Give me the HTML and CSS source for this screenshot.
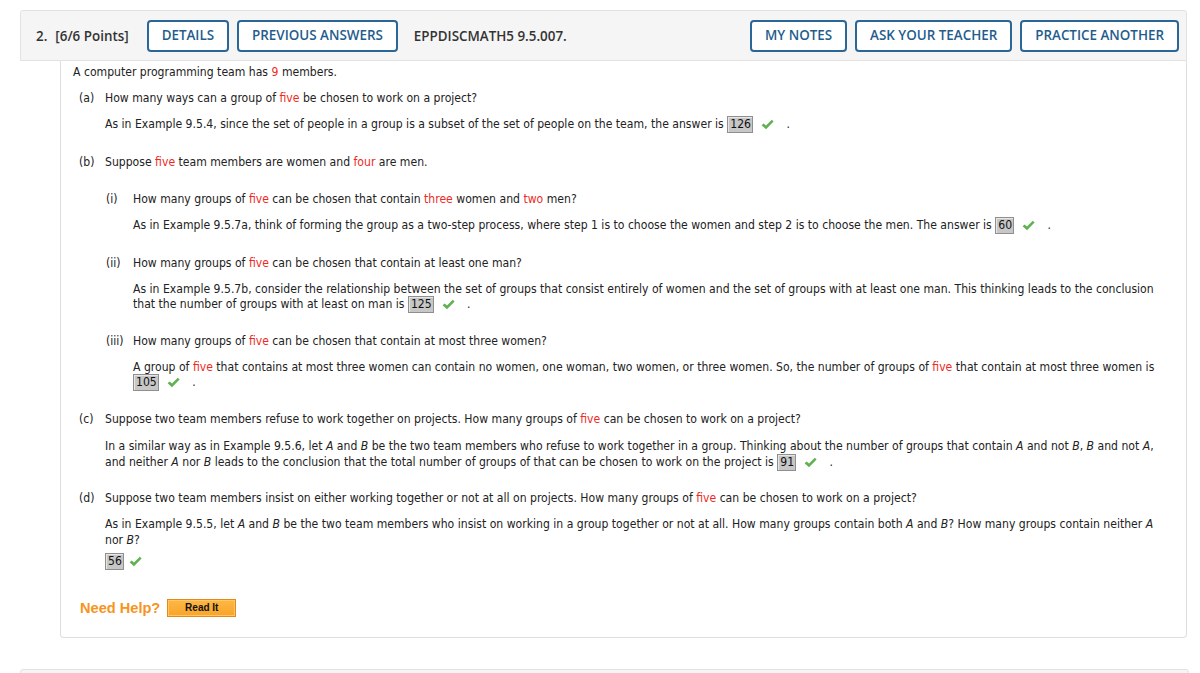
FILE: index.html
```html
<!DOCTYPE html>
<html lang="en">
<head>
<meta charset="utf-8">
<title>Question 2</title>
<link rel="stylesheet" href="styles.css">
</head>
<body>
<div class="question">
  <div class="q-header">
    <span class="q-num">2.</span>
    <span class="q-points">[6/6 Points]</span>
    <button class="btn">DETAILS</button>
    <button class="btn">PREVIOUS ANSWERS</button>
    <span class="q-code">EPPDISCMATH5 9.5.007.</span>
    <span class="spacer"></span>
    <button class="btn">MY NOTES</button>
    <button class="btn">ASK YOUR TEACHER</button>
    <button class="btn">PRACTICE ANOTHER</button>
  </div>
  <div class="q-body">
    <p class="line">A computer programming team has <span class="red">9</span> members.</p>

    <div class="part">
      <span class="label">(a)</span>
      <div class="part-body">
        <p class="line">How many ways can a group of <span class="red">five</span> be chosen to work on a project?</p>
        <p class="line ans">As in Example 9.5.4, since the set of people in a group is a subset of the set of people on the team, the answer is <span class="box">126</span><svg class="chk" viewBox="0 0 13 11"><path d="M0.6 6.2 L2.6 4.4 L5 6.6 L10.8 0.8 L12.6 2.4 L5 10.2 Z"/></svg> .</p>
      </div>
    </div>

    <div class="part gap">
      <span class="label">(b)</span>
      <div class="part-body">
        <p class="line">Suppose <span class="red">five</span> team members are women and <span class="red">four</span> are men.</p>

        <div class="sub">
          <span class="slabel">(i)</span>
          <div class="part-body">
            <p class="line">How many groups of <span class="red">five</span> can be chosen that contain <span class="red">three</span> women and <span class="red">two</span> men?</p>
            <p class="line ans">As in Example 9.5.7a, think of forming the group as a two-step process, where step 1 is to choose the women and step 2 is to choose the men. The answer is <span class="box">60</span><svg class="chk" viewBox="0 0 13 11"><path d="M0.6 6.2 L2.6 4.4 L5 6.6 L10.8 0.8 L12.6 2.4 L5 10.2 Z"/></svg> .</p>
          </div>
        </div>

        <div class="sub wide">
          <span class="slabel">(ii)</span>
          <div class="part-body">
            <p class="line">How many groups of <span class="red">five</span> can be chosen that contain at least one man?</p>
            <p class="line ans tight">As in Example 9.5.7b, consider the relationship between the set of groups that consist entirely of women and the set of groups with at least one man. This thinking leads to the conclusion that the number of groups with at least on man is <span class="box">125</span><svg class="chk" viewBox="0 0 13 11"><path d="M0.6 6.2 L2.6 4.4 L5 6.6 L10.8 0.8 L12.6 2.4 L5 10.2 Z"/></svg> .</p>
          </div>
        </div>

        <div class="sub">
          <span class="slabel">(iii)</span>
          <div class="part-body">
            <p class="line">How many groups of <span class="red">five</span> can be chosen that contain at most three women?</p>
            <p class="line ans tight">A group of <span class="red">five</span> that contains at most three women can contain no women, one woman, two women, or three women. So, the number of groups of <span class="red">five</span> that contain at most three women is <span class="box">105</span><svg class="chk" viewBox="0 0 13 11"><path d="M0.6 6.2 L2.6 4.4 L5 6.6 L10.8 0.8 L12.6 2.4 L5 10.2 Z"/></svg> .</p>
          </div>
        </div>
      </div>
    </div>

    <div class="part gap-c">
      <span class="label">(c)</span>
      <div class="part-body">
        <p class="line">Suppose two team members refuse to work together on projects. How many groups of <span class="red">five</span> can be chosen to work on a project?</p>
        <p class="line ans loose">In a similar way as in Example 9.5.6, let <i>A</i> and <i>B</i> be the two team members who refuse to work together in a group. Thinking about the number of groups that contain <i>A</i> and not <i>B</i>, <i>B</i> and not <i>A</i>, and neither <i>A</i> nor <i>B</i> leads to the conclusion that the total number of groups of that can be chosen to work on the project is <span class="box">91</span><svg class="chk" viewBox="0 0 13 11"><path d="M0.6 6.2 L2.6 4.4 L5 6.6 L10.8 0.8 L12.6 2.4 L5 10.2 Z"/></svg> .</p>
      </div>
    </div>

    <div class="part gap-d">
      <span class="label">(d)</span>
      <div class="part-body">
        <p class="line">Suppose two team members insist on either working together or not at all on projects. How many groups of <span class="red">five</span> can be chosen to work on a project?</p>
        <p class="line ans">As in Example 9.5.5, let <i>A</i> and <i>B</i> be the two team members who insist on working in a group together or not at all. How many groups contain both <i>A</i> and <i>B</i>? How many groups contain neither <i>A</i> nor <i>B</i>?</p>
        <p class="line ans-only"><span class="box">56</span><svg class="chk" viewBox="0 0 13 11"><path d="M0.6 6.2 L2.6 4.4 L5 6.6 L10.8 0.8 L12.6 2.4 L5 10.2 Z"/></svg></p>
      </div>
    </div>

    <div class="help">
      <span class="help-text">Need Help?</span>
      <button class="read-it">Read It</button>
    </div>
  </div>
</div>
<div class="next-question"></div>
</body>
</html>
```
FILE: styles.css
```css
html, body {
  margin: 0;
  padding: 0;
  background: #ffffff;
}
body {
  padding: 10px 13px 0 20px;
  height: 673px;
  box-sizing: border-box;
  overflow: hidden;
}
.question {
  width: 1167px;
}
.q-header {
  box-sizing: border-box;
  height: 51px;
  display: flex;
  align-items: center;
  background: #f5f5f5;
  border: 1px solid #e2e2e2;
  border-radius: 3px 3px 0 0;
  padding: 0 7px 0 15px;
  font-family: "Open Sans", "Noto Sans", sans-serif;
  font-weight: 600;
  font-size: 13.4px;
  color: #333333;
}
.q-num {
  margin-right: 8px;
}
.q-points {
  margin-right: 18px;
}
.q-code {
  margin-left: 8px;
}
.spacer {
  flex: 1;
}
.btn {
  box-sizing: border-box;
  height: 32px;
  padding: 0 13px;
  margin-right: 8px;
  background: #ffffff;
  border: 2px solid #2a6797;
  border-radius: 4px;
  color: #1f5d8e;
  font-family: "Open Sans", "Noto Sans", sans-serif;
  font-weight: 600;
  font-size: 13.4px;
  line-height: 1;
}
.btn:last-child {
  margin-right: 0;
}
.q-body {
  margin-left: 40px;
  border: 1px solid #dedede;
  border-top: none;
  border-radius: 0 0 4px 4px;
  padding: 3px 14px 20px 12px;
  font-family: "DejaVu Sans Condensed", "DejaVu Sans", Verdana, sans-serif;
  font-size: 12.1px;
  color: #222222;
}
.line {
  margin: 0;
  line-height: 16px;
}
.line.tight {
  line-height: 15px;
  margin-top: 11px;
}
.red {
  color: #ee2a24;
}
i {
  font-style: oblique;
}
.part {
  display: flex;
  margin-top: 10px;
  margin-left: 6px;
}
.part.gap {
  margin-top: 22px;
}
.part.gap-c {
  margin-top: 21px;
}
.part.gap-d {
  margin-top: 20px;
}
.label {
  flex: none;
  width: 26px;
  line-height: 16px;
}
.part-body {
  flex: 1;
  min-width: 0;
}
.ans {
  margin-top: 10px;
}
.ans.loose {
  margin-top: 11px;
}
.ans-only {
  margin-top: 5px;
}
.sub {
  display: flex;
  margin-top: 21px;
  margin-left: 1px;
}
.sub.wide {
  margin-top: 22px;
}
.slabel {
  flex: none;
  width: 27px;
  line-height: 16px;
}
.box {
  display: inline-block;
  line-height: 13px;
  margin: -1px 0;
  padding: 1px 1px 1px 2px;
  background: #c7c7c7;
  border: 1px solid #8f8f8f;
  box-shadow: inset 1px 1px 0 #e6e6e6;
  color: #111111;
  vertical-align: baseline;
}
.chk {
  display: inline-block;
  width: 13px;
  height: 11px;
  margin: 0 9px 0 8px;
  vertical-align: -2px;
  fill: #5fb152;
}
.ans-only .chk {
  margin-left: 5px;
}
.help {
  display: flex;
  align-items: center;
  margin-top: 30px;
  margin-left: 7px;
}
.help-text {
  font-family: "Liberation Sans", Arial, sans-serif;
  font-weight: bold;
  font-size: 14.6px;
  color: #f7941e;
}
.read-it {
  box-sizing: border-box;
  width: 69px;
  height: 18px;
  margin-left: 7px;
  padding: 0;
  background: linear-gradient(#fdb844, #f9a42a);
  border: 1px solid #e38a1f;
  box-shadow: inset 0 0 0 1px #ffc766;
  color: #111111;
  font-family: "Liberation Sans", Arial, sans-serif;
  font-weight: bold;
  font-size: 10px;
  line-height: 16px;
}
.next-question {
  margin-top: 31px;
  width: 1167px;
  height: 30px;
  background: #f5f5f5;
  border: 1px solid #e2e2e2;
  border-radius: 3px 3px 0 0;
}
```
